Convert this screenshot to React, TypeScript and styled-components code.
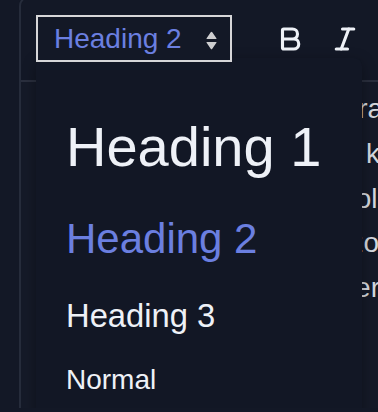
import React from "react";
import styled, { createGlobalStyle } from "styled-components";
import { Bold, Italic } from "lucide-react";

const GlobalStyle = createGlobalStyle`
  html, body {
    margin: 0;
    padding: 0;
    background: #131826;
    overflow: hidden;
  }
  body {
    font-family: "Liberation Sans", Arial, sans-serif;
  }
`;

const Page = styled.div`
  padding-left: 19px;
  height: 412px;
`;

const Editor = styled.div`
  position: relative;
  width: 420px;
  height: 460px;
  margin-top: -4px;
  border: 2px solid #262c3b;
  border-radius: 10px;
  overflow: hidden;
`;

const Toolbar = styled.div`
  display: flex;
  align-items: center;
  padding: 17px 15px 18px;
  border-bottom: 2px solid #2a2f3e;
`;

const Select = styled.div`
  position: relative;
  z-index: 2;
  box-sizing: border-box;
  display: flex;
  align-items: center;
  justify-content: space-between;
  width: 196px;
  height: 47px;
  padding: 0 12px 0 16px;
  border: 2px solid #d6d6d8;
  background: #131826;
  color: #6b7fe0;
  font-size: 28px;
`;

const ToolButton = styled.button`
  display: flex;
  align-items: center;
  justify-content: center;
  width: 40px;
  height: 40px;
  padding: 0;
  border: none;
  background: transparent;
  color: #eef1f7;
  cursor: pointer;
  & + & {
    margin-left: 15px;
  }
`;

const Buttons = styled.div`
  display: flex;
  margin-left: 38px;
`;

const Content = styled.div`
  height: 100%;
  padding: 5px 15px;
  background: #151a28;
  color: #d4d7de;
  font-size: 28px;
  line-height: 44.8px;
  white-space: nowrap;
`;

const Line = styled.div``;

const Dropdown = styled.div`
  position: absolute;
  z-index: 1;
  top: 60px;
  left: 15px;
  box-sizing: border-box;
  width: 326px;
  height: 420px;
  padding: 55px 30px 0;
  background: #121725;
  border-radius: 8px;
  box-shadow: 0 4px 14px rgba(0, 0, 0, 0.35);
  display: flex;
  flex-direction: column;
  align-items: flex-start;
`;

const Option = styled.div<{ $size: number; $space: number; $active?: boolean }>`
  font-size: ${(p) => p.$size}px;
  line-height: 1.2;
  margin-bottom: ${(p) => p.$space}px;
  color: ${(p) => (p.$active ? "#6b7fe0" : "#eef1f7")};
  white-space: nowrap;
  cursor: pointer;
`;

const Chevrons = () => (
  <svg width="13" height="22" viewBox="0 0 13 22" fill="#cdcdcf">
    <path d="M1.6 10.2 L5.7 4.2 Q6.5 3.1 7.3 4.2 L11.4 10.2 Q12 11 11 11 H2 Q1 11 1.6 10.2 Z" />
    <path d="M1.6 14.8 L5.7 20.8 Q6.5 21.9 7.3 20.8 L11.4 14.8 Q12 14 11 14 H2 Q1 14 1.6 14.8 Z" />
  </svg>
);

const options = [
  { label: "Heading 1", size: 56, space: 34 },
  { label: "Heading 2", size: 42, space: 31.4, active: true },
  { label: "Heading 3", size: 32.76, space: 28.2 },
  { label: "Normal", size: 28, space: 0 },
];

const lines = [
  "Click and drag to select a range of text",
  "and apply styles using the keyboard",
  "Use Ctrl+B to make text bold and Ctrl+I",
  "You can also insert a horizontal rule",
  "Block types are listed under the menu",
];

export default function App() {
  return (
    <>
      <GlobalStyle />
      <Page>
        <Editor>
          <Toolbar>
            <Select>
              <span>Heading 2</span>
              <Chevrons />
            </Select>
            <Buttons>
              <ToolButton aria-label="Bold">
                <Bold size={30} strokeWidth={2.5} />
              </ToolButton>
              <ToolButton aria-label="Italic">
                <Italic size={30} strokeWidth={2.5} />
              </ToolButton>
            </Buttons>
          </Toolbar>
          <Content>
            {lines.map((l) => (
              <Line key={l}>{l}</Line>
            ))}
          </Content>
          <Dropdown>
            {options.map((o) => (
              <Option key={o.label} $size={o.size} $space={o.space} $active={o.active}>
                {o.label}
              </Option>
            ))}
          </Dropdown>
        </Editor>
      </Page>
    </>
  );
}
